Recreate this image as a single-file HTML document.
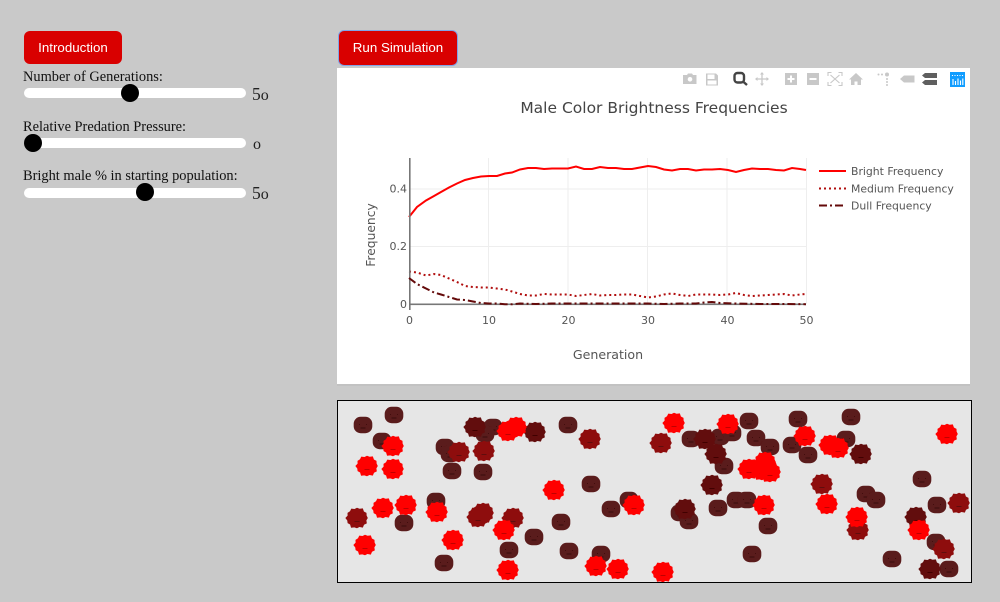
<!DOCTYPE html>
<html><head><meta charset="utf-8"><title>Simulation</title>
<style>
html,body{margin:0;padding:0;width:1000px;height:602px;overflow:hidden;background:#c9c9c9}
.a{position:absolute}
.btn{background:#d90000;color:#fff;font:13.33px "Liberation Sans",sans-serif;text-align:center;border-radius:6px;box-sizing:border-box}
.lbl{font:14.4px "Liberation Serif",serif;color:#111;white-space:nowrap}
.tr{left:24px;width:222px;height:10px;background:#fff;border-radius:5px}
.th{width:18px;height:18px;border-radius:50%;background:#000}
.val{font:17.5px "Liberation Serif",serif;color:#222;white-space:nowrap}
.val i{font-style:normal;font-size:16px}
svg text{font-family:"DejaVu Sans",sans-serif}
</style></head><body>
<div class="a btn" style="left:24px;top:31px;width:98px;height:33px;line-height:33px">Introduction</div>
<div class="a lbl" style="left:23px;top:69px">Number of Generations:</div>
<div class="a tr" style="top:88px"></div><div class="a th" style="left:121px;top:84px"></div>
<div class="a val" style="left:252px;top:84px">5<i>o</i></div>
<div class="a lbl" style="left:23px;top:119px">Relative Predation Pressure:</div>
<div class="a tr" style="top:138px"></div><div class="a th" style="left:24px;top:134px"></div>
<div class="a val" style="left:253px;top:133px"><i>o</i></div>
<div class="a lbl" style="left:23px;top:168px">Bright male % in starting population:</div>
<div class="a tr" style="top:188px"></div><div class="a th" style="left:136px;top:183px"></div>
<div class="a val" style="left:252px;top:183px">5<i>o</i></div>

<div class="a btn" style="left:338px;top:30px;width:120px;height:36px;line-height:34px;border:1.5px solid #80a4e8">Run Simulation</div>

<svg class="a" style="left:0;top:0" width="1000" height="602" viewBox="0 0 1000 602">
<defs>
<filter id="soft" x="-2%" y="-2%" width="104%" height="104%"><feGaussianBlur stdDeviation="0.35"/></filter>
<polygon id="sp" transform="scale(1.08)" points="10,0 8.7,2.2 9.1,5 6.5,6.2 5.4,8.9 2.3,8.3 0,9.5 -2.500,8.7 -5.500,9 -6.400,6 -8.700,4.800 -9,2.300 -10.800,0 -8.700,-2.200 -8.800,-4.800 -6.500,-6.200 -5.300,-8.700 -2.300,-8.300 0,-9.500 2.400,-8.600 5.400,-8.900 6.400,-6 8.800,-4.800 8.900,-2.300"/>
<g id="b"><rect x="-9.300" y="-8.200" width="18.600" height="16.400" rx="7" fill="#5a1a1a"/><rect x="-2.500" y="2.500" width="5" height="1" fill="#380a0a"/><rect x="-4" y="-1" width="1" height="1" fill="#430f0f"/><rect x="3" y="-1" width="1" height="1" fill="#430f0f"/></g>
<g id="r"><use href="#sp" fill="#f00"/><rect x="-2.500" y="3" width="5" height="1" fill="#c00000"/></g>
<g id="m"><use href="#sp" fill="#8e1010"/><rect x="-2.500" y="3" width="5" height="1" fill="#600808"/></g>
<g id="d"><use href="#sp" fill="#620808"/><rect x="-2.500" y="3" width="5" height="1" fill="#400000"/></g>
</defs>

<!-- plot panel -->
<rect x="337" y="68" width="633" height="316" fill="#fff"/>
<rect x="337" y="384" width="633" height="2" fill="#c2c2c2"/>

<!-- modebar -->
<g fill="#c8c8c8">
<path d="M683 75h4l1-1.500h4l1 1.500h3.500v9h-13.500z"/><circle cx="690" cy="79.300" r="2.300" fill="#fff"/>
<path fill-rule="evenodd" d="M706 73.500h10l2 2v10h-12zM707.500 74.500v4.500h7v-4.500zM707.500 80.500v4h9v-4z"/>
<path fill="none" stroke="#c8c8c8" stroke-width="1.300" d="M762 73v12M756 79h12"/>
<path d="M762 72l2 2.500h-4zM762 86l2-2.500h-4zM755 79l2.500-2v4zM769 79l-2.500-2v4z"/>
<path fill-rule="evenodd" d="M785 73h12v12h-12zM790 75.500v2.500h-2.500v2h2.500v2.500h2v-2.500h2.500v-2h-2.500v-2.500z"/>
<path fill-rule="evenodd" d="M807 73h12v12h-12zM809.500 78v2h7v-2z"/>
<path fill="none" stroke="#c8c8c8" stroke-width="1.100" d="M828 76v-3.500h3.500M838.500 72.500h3.500v3.500M842 82v3.500h-3.500M831.500 85.500h-3.500v-3.500M830.500 75l9 8M839.500 75l-9 8"/>
<path d="M856 73l7 6.500h-2v5.500h-3.500v-3.500h-3v3.500h-3.500v-5.500h-2z"/>
<circle cx="878.500" cy="74.500" r="1"/><circle cx="882" cy="74.500" r="1"/><circle cx="887" cy="74.500" r="2"/><circle cx="887" cy="79" r="1"/><circle cx="887" cy="82" r="1"/><circle cx="887" cy="85" r="1"/>
<path d="M900 79l4-3.500h10.500v7h-10.500z"/>
</g>
<path fill="#5f5f5f" d="M922 75.500l3-2.500h12v5h-12zM922 82.500l3-2.500h12v5h-12z"/>
<rect x="734.500" y="73" width="9.500" height="9.500" rx="3" fill="none" stroke="#444" stroke-width="2.400"/><path d="M743 81.500l4 3.500" stroke="#444" stroke-width="2.400"/>
<rect x="950" y="72" width="15" height="15" fill="#119dff"/>
<path d="M952.500 75v1M955 75v1M957.500 75v1M960 75v1M962.500 75v1M953 79v6M955.500 81v4M958 78.500v6.500M960.500 80.500v4.500M962.800 78.500v6.500" stroke="#fff" stroke-width="1.100" fill="none"/>

<!-- title -->
<text x="654" y="113" text-anchor="middle" font-size="15.500" fill="#444">Male Color Brightness Frequencies</text>

<!-- grid -->
<g stroke="#eee" stroke-width="1" fill="none">
<path d="M488.500 158v146M568 158v146M647.500 158v146M727 158v146M806.500 158v146M409 189h397M409 246.500h397"/>
</g>

<!-- lines -->
<polyline fill="none" stroke="#f00" stroke-width="2" points="409,217 417,207 426,200.500 434,196 441,192 449,187.500 457,183.500 465,180 473,178 481,176.500 489,176 497,176 505,173.500 512,172.500 520,169.500 528,168 536,168 544,169 552,168.500 560,168.500 568,168.500 576,166.500 584,169 592,169 600,167 608,168 616,168 624,169 632,169 640,167.500 648,166 656,167 664,169.500 672,170.500 680,169 688,169 696,170.500 704,169.500 712,169.500 720,169 728,170 736,172 744,170 752,168.500 760,169 768,169 776,170 784,170.500 792,168 800,169 806,170"/>
<polyline fill="none" stroke="#b00d0d" stroke-width="2" stroke-dasharray="2 3" points="409,271.500 417,272.500 426,275.500 434,274 441,275 449,278.500 457,282 465,286 473,287 481,287.500 489,287.500 497,288.500 505,289.500 512,291.500 520,294 528,295.500 536,295.500 544,294 552,294.500 560,294.500 568,294.500 576,296 584,295 592,294 600,295.500 608,295 616,295 624,294.500 632,294.500 640,296 648,297.500 656,296.500 664,294.500 672,293.500 680,295 688,296 696,294.500 704,294.500 712,294.500 720,295 728,294.500 736,293 744,295 752,296 760,295.500 768,295 776,294.500 784,294 792,295.500 800,294.500 806,294"/>
<rect x="409" y="158" width="1.600" height="152" fill="#777"/>
<rect x="409" y="303.500" width="397" height="1.600" fill="#777"/>
<polyline fill="none" stroke="#640a0a" stroke-width="2" stroke-dasharray="8 3 2 3" points="409,278 417,284 426,288.500 434,292.500 441,294.500 449,297 457,299.500 465,300 473,301.500 481,303 489,303.500 497,303.500 505,304.300 512,304.300 520,303.500 536,304 552,303.500 568,303.500 584,303.500 600,303.500 616,303.500 632,303.500 648,303.500 664,304 680,303.500 696,303.500 704,302.500 712,302 720,303 736,303.500 760,304 784,304 806,304.200"/>

<!-- tick labels -->
<g font-size="11" fill="#555">
<text x="407" y="192.500" text-anchor="end">0.4</text>
<text x="407" y="250" text-anchor="end">0.2</text>
<text x="407" y="308" text-anchor="end">0</text>
<g text-anchor="middle">
<text x="409.500" y="324">0</text><text x="489" y="324">10</text><text x="568.500" y="324">20</text><text x="648" y="324">30</text><text x="727.500" y="324">40</text><text x="806.500" y="324">50</text>
</g></g>
<text x="608" y="359" text-anchor="middle" font-size="12.600" fill="#555">Generation</text>
<text transform="translate(375 235) rotate(-90)" text-anchor="middle" font-size="12.300" fill="#555">Frequency</text>

<!-- legend -->
<path d="M819 171h27" stroke="#f00" stroke-width="2"/>
<path d="M819 188.500h27" stroke="#b00d0d" stroke-width="2" stroke-dasharray="2 3"/>
<path d="M819 205.500h27" stroke="#640a0a" stroke-width="2" stroke-dasharray="8 3 2 3"/>
<g font-size="10.850" fill="#555">
<text x="851" y="175">Bright Frequency</text>
<text x="851" y="192.500">Medium Frequency</text>
<text x="851" y="209.500">Dull Frequency</text>
</g>

<!-- canvas -->
<rect x="337.500" y="400.500" width="634" height="182" fill="#e6e6e6" stroke="#000" stroke-width="1"/>
<svg x="338" y="401" width="633" height="181" viewBox="338 401 633 181">
<g filter="url(#soft)">
<use href="#b" x="363" y="425"/><use href="#b" x="394" y="415"/><use href="#b" x="382" y="441"/>
<use href="#b" x="493" y="427"/><use href="#b" x="485" y="434"/><use href="#d" x="475" y="427"/>
<use href="#d" x="535" y="432"/><use href="#b" x="445" y="447"/><use href="#b" x="450" y="454"/>
<use href="#m" x="459" y="452"/><use href="#m" x="484" y="451"/><use href="#b" x="452" y="471"/><use href="#b" x="483" y="472"/>
<use href="#b" x="436" y="501"/><use href="#b" x="404" y="523"/><use href="#m" x="357" y="518"/>
<use href="#m" x="483" y="513"/><use href="#m" x="478" y="517"/><use href="#m" x="513" y="518"/>
<use href="#b" x="534" y="537"/><use href="#b" x="509" y="550"/><use href="#b" x="444" y="563"/>
<use href="#b" x="568" y="425"/><use href="#m" x="590" y="439"/><use href="#m" x="661" y="443"/>
<use href="#b" x="691" y="439"/><use href="#b" x="720" y="437"/><use href="#b" x="732" y="433"/><use href="#d" x="705" y="439"/>
<use href="#b" x="749" y="421"/><use href="#b" x="756" y="438"/><use href="#b" x="770" y="447"/>
<use href="#b" x="724" y="466"/><use href="#d" x="716" y="454"/><use href="#d" x="712" y="485"/>
<use href="#b" x="591" y="484"/><use href="#b" x="629" y="500"/><use href="#b" x="611" y="509"/>
<use href="#b" x="680" y="513"/><use href="#b" x="689" y="521"/><use href="#d" x="685" y="509"/>
<use href="#b" x="718" y="508"/><use href="#b" x="736" y="500"/><use href="#b" x="747" y="500"/>
<use href="#b" x="768" y="526"/><use href="#b" x="561" y="522"/><use href="#b" x="569" y="551"/><use href="#b" x="601" y="554"/><use href="#b" x="752" y="554"/>
<use href="#b" x="798" y="419"/><use href="#b" x="851" y="417"/><use href="#b" x="792" y="445"/><use href="#b" x="808" y="455"/><use href="#b" x="846" y="439"/>
<use href="#b" x="922" y="479"/><use href="#m" x="822" y="484"/><use href="#b" x="866" y="494"/><use href="#b" x="876" y="500"/>
<use href="#b" x="937" y="505"/><use href="#m" x="959" y="503"/><use href="#d" x="916" y="517"/><use href="#m" x="858" y="530"/>
<use href="#b" x="936" y="542"/><use href="#m" x="944" y="549"/><use href="#b" x="892" y="559"/><use href="#b" x="949" y="569"/><use href="#d" x="930" y="569"/>
<use href="#r" x="393" y="446"/><use href="#r" x="367" y="466"/><use href="#r" x="393" y="469"/>
<use href="#r" x="516" y="427"/><use href="#r" x="508" y="431"/><use href="#r" x="554" y="490"/>
<use href="#r" x="437" y="512"/><use href="#r" x="383" y="508"/><use href="#r" x="406" y="505"/>
<use href="#r" x="504" y="530"/><use href="#r" x="365" y="545"/><use href="#r" x="453" y="540"/><use href="#r" x="508" y="570"/>
<use href="#r" x="674" y="423"/><use href="#r" x="728" y="424"/><use href="#r" x="749" y="469"/><use href="#r" x="765" y="462"/><use href="#r" x="762" y="470"/><use href="#r" x="770" y="472"/>
<use href="#r" x="634" y="505"/><use href="#r" x="764" y="505"/><use href="#r" x="596" y="566"/><use href="#r" x="618" y="569"/><use href="#r" x="663" y="572"/>
<use href="#r" x="805" y="436"/><use href="#r" x="830" y="445"/><use href="#r" x="838" y="448"/><use href="#d" x="861" y="454"/>
<use href="#r" x="947" y="434"/><use href="#r" x="827" y="504"/><use href="#r" x="857" y="517"/><use href="#r" x="919" y="530"/>
</g>
</svg>
</svg>
</body></html>
